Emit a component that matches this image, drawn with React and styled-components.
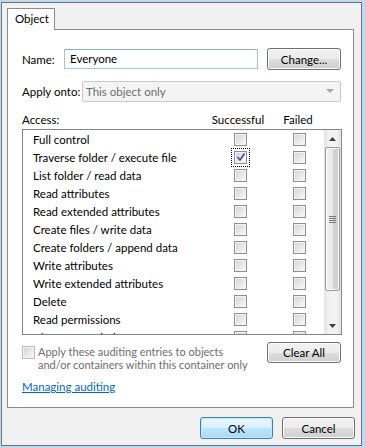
import React from 'react';
import styled, { createGlobalStyle } from 'styled-components';

const GlobalStyle = createGlobalStyle`
  html, body {
    margin: 0;
    padding: 0;
    background: #c4d7eb;
  }
  body {
    width: 366px;
    height: 448px;
    overflow: hidden;
    font-family: Lato, 'Noto Sans', sans-serif;
    font-size: 11.5px;
    color: #000;
  }
`;

const Window = styled.div`
  box-sizing: border-box;
  width: 361px;
  height: 444px;
  margin: 2px 0 0 1px;
  border: 1px solid #6a7583;
  background: #f0f0f0;
  padding: 5px 0 0 5px;
`;

const TabStrip = styled.div`
  display: flex;
  position: relative;
  z-index: 1;
  margin-bottom: -1px;
`;

const Tab = styled.div`
  box-sizing: border-box;
  width: 48px;
  height: 22px;
  padding: 3px 0 0 7px;
  border: 1px solid #898c95;
  border-bottom: none;
  background: #fff;
`;

const Panel = styled.div`
  box-sizing: border-box;
  width: 347px;
  height: 379px;
  border: 1px solid #898c95;
  background: #fff;
  padding: 18px 12px 0 14px;
  display: flex;
  flex-direction: column;
`;

const FieldRow = styled.div`
  display: flex;
  align-items: center;
  height: 22px;
  margin-top: ${(p) => p.$top || 0}px;
`;

const Label = styled.div`
  width: ${(p) => p.$width}px;
  flex-shrink: 0;
  white-space: nowrap;
`;

const TextBox = styled.div`
  box-sizing: border-box;
  width: 195px;
  height: 20px;
  border: 1px solid #a6c3e3;
  border-top-color: #8fb0d6;
  padding: 1px 0 0 5px;
  line-height: 16px;
`;

const Button = styled.div`
  box-sizing: border-box;
  width: ${(p) => p.$width || 74}px;
  height: ${(p) => p.$height || 22}px;
  margin-left: ${(p) => p.$left || 0}px;
  border: 1px solid ${(p) => (p.$default ? '#3c7fb1' : '#707070')};
  border-radius: 3px;
  background: ${(p) =>
    p.$default
      ? 'linear-gradient(#eaf6fd 0%, #d9f0fc 50%, #bee6fd 51%, #a7d9f5 100%)'
      : 'linear-gradient(#f2f2f2 0%, #ebebeb 50%, #dddddd 51%, #cfcfcf 100%)'};
  box-shadow: inset 0 0 0 1px ${(p) => (p.$default ? '#c7e6f8' : '#fcfcfc')};
  display: flex;
  align-items: center;
  justify-content: center;
  flex-shrink: 0;
`;

const Combo = styled.div`
  box-sizing: border-box;
  width: 259px;
  height: 21px;
  border: 1px solid #c9c9c9;
  border-radius: 2px;
  background: #f4f4f4;
  color: #6d6d6d;
  display: flex;
  align-items: center;
  justify-content: space-between;
  padding: 0 6px 0 3px;
`;

const ComboArrow = styled.div`
  width: 0;
  height: 0;
  border-left: 4px solid transparent;
  border-right: 4px solid transparent;
  border-top: 4px solid #a8a8a8;
`;

const HeaderRow = styled.div`
  display: grid;
  grid-template-columns: 186px 60px 15px 30px;
  height: 16px;
  align-items: center;
  margin-top: 9px;
  span {
    text-align: center;
    white-space: nowrap;
  }
`;

const ListBox = styled.div`
  box-sizing: border-box;
  width: 320px;
  height: 206px;
  margin-top: 2px;
  border: 1px solid #828790;
  display: flex;
  overflow: hidden;
`;

const Rows = styled.div`
  flex: 1;
`;

const Row = styled.div`
  display: grid;
  grid-template-columns: 211px 13px 46px 13px 1fr;
  align-items: center;
  height: 18px;
  span {
    padding-left: 10px;
    white-space: nowrap;
  }
`;

const Check = styled.div`
  position: relative;
  box-sizing: border-box;
  width: 13px;
  height: 13px;
  border: 1px solid ${(p) => (p.$disabled ? '#bcbcbc' : '#8f8f8f')};
  background: linear-gradient(135deg, #d4d4d4 0%, #e6e6e6 50%, #fbfbfb 100%);
  box-shadow: inset 0 0 0 1px #f4f4f4;
  outline: ${(p) => (p.$focus ? '1px dotted #000' : 'none')};
  outline-offset: 2px;
  svg {
    position: absolute;
    left: 1px;
    top: 0px;
  }
`;

const ScrollBar = styled.div`
  width: 17px;
  background: linear-gradient(90deg, #e3e3e3, #f3f3f3 30%, #f3f3f3 70%, #e3e3e3);
  display: flex;
  flex-direction: column;
  align-items: center;
`;

const ScrollArrow = styled.div`
  height: 17px;
  width: 17px;
  display: flex;
  align-items: center;
  justify-content: center;
  flex-shrink: 0;
`;

const Thumb = styled.div`
  box-sizing: border-box;
  width: 15px;
  height: 144px;
  border: 1px solid #9b9b9b;
  border-radius: 2px;
  background: linear-gradient(90deg, #f3f3f3 0%, #e8e8e8 50%, #d4d4d4 51%, #d0d0d0 100%);
  box-shadow: inset 0 0 0 1px #fafafa;
  display: flex;
  align-items: center;
  justify-content: center;
`;

const Grip = styled.div`
  width: 7px;
  height: 7px;
  background: repeating-linear-gradient(#7a7a7a 0 1px, transparent 1px 2px);
`;

const Track = styled.div`
  flex: 1;
`;

const BottomRow = styled.div`
  display: flex;
  justify-content: space-between;
  align-items: flex-start;
  margin-top: 7px;
`;

const ApplyOption = styled.div`
  display: flex;
  align-items: flex-start;
  gap: 3px;
  color: #6d6d6d;
  font-size: 11px;
  line-height: 13px;
  padding-top: 3px;
  white-space: nowrap;
  > div:first-child {
    margin-top: 1px;
    flex-shrink: 0;
  }
`;

const Link = styled.a`
  color: #0066cc;
  text-decoration: underline;
  margin-top: 9px;
  align-self: flex-start;
`;

const Footer = styled.div`
  display: flex;
  justify-content: flex-end;
  gap: 9px;
  padding: 9px 6px 0 0;
`;

const items = [
  'Full control',
  'Traverse folder / execute file',
  'List folder / read data',
  'Read attributes',
  'Read extended attributes',
  'Create files / write data',
  'Create folders / append data',
  'Write attributes',
  'Write extended attributes',
  'Delete',
  'Read permissions',
  'Change permissions',
];

const CheckMark = () => (
  <svg width="10" height="10" viewBox="0 0 10 10">
    <path d="M1.5 5 L4 8 L8.5 1.5" fill="none" stroke="#3b4f8f" strokeWidth="1.6" />
  </svg>
);

const Arrow = ({ up }) => (
  <svg width="7" height="4" viewBox="0 0 7 4">
    <path d={up ? 'M0 4 L3.5 0 L7 4 Z' : 'M0 0 L3.5 4 L7 0 Z'} fill="#404040" />
  </svg>
);

const App = () => {
  return (
    <>
      <GlobalStyle />
      <Window>
        <TabStrip>
          <Tab>Object</Tab>
        </TabStrip>
        <Panel>
          <FieldRow>
            <Label $width={42}>Name:</Label>
            <TextBox>Everyone</TextBox>
            <Button $left={9}>Change...</Button>
          </FieldRow>
          <FieldRow $top={10}>
            <Label $width={60}>Apply onto:</Label>
            <Combo>
              <span>This object only</span>
              <ComboArrow />
            </Combo>
          </FieldRow>
          <HeaderRow>
            <div>Access:</div>
            <span>Successful</span>
            <div />
            <span>Failed</span>
          </HeaderRow>
          <ListBox>
            <Rows>
              {items.map((name, i) => (
                <Row key={name}>
                  <span>{name}</span>
                  <Check $focus={i === 1}>{i === 1 && <CheckMark />}</Check>
                  <div />
                  <Check />
                  <div />
                </Row>
              ))}
            </Rows>
            <ScrollBar>
              <ScrollArrow>
                <Arrow up />
              </ScrollArrow>
              <Thumb>
                <Grip />
              </Thumb>
              <Track />
              <ScrollArrow>
                <Arrow />
              </ScrollArrow>
            </ScrollBar>
          </ListBox>
          <BottomRow>
            <ApplyOption>
              <Check $disabled />
              <div>
                Apply these auditing entries to objects
                <br />
                and/or containers within this container only
              </div>
            </ApplyOption>
            <Button $height={21}>Clear All</Button>
          </BottomRow>
          <Link>Managing auditing</Link>
        </Panel>
        <Footer>
          <Button $default $width={73}>OK</Button>
          <Button $width={73}>Cancel</Button>
        </Footer>
      </Window>
    </>
  );
};

export default App;
